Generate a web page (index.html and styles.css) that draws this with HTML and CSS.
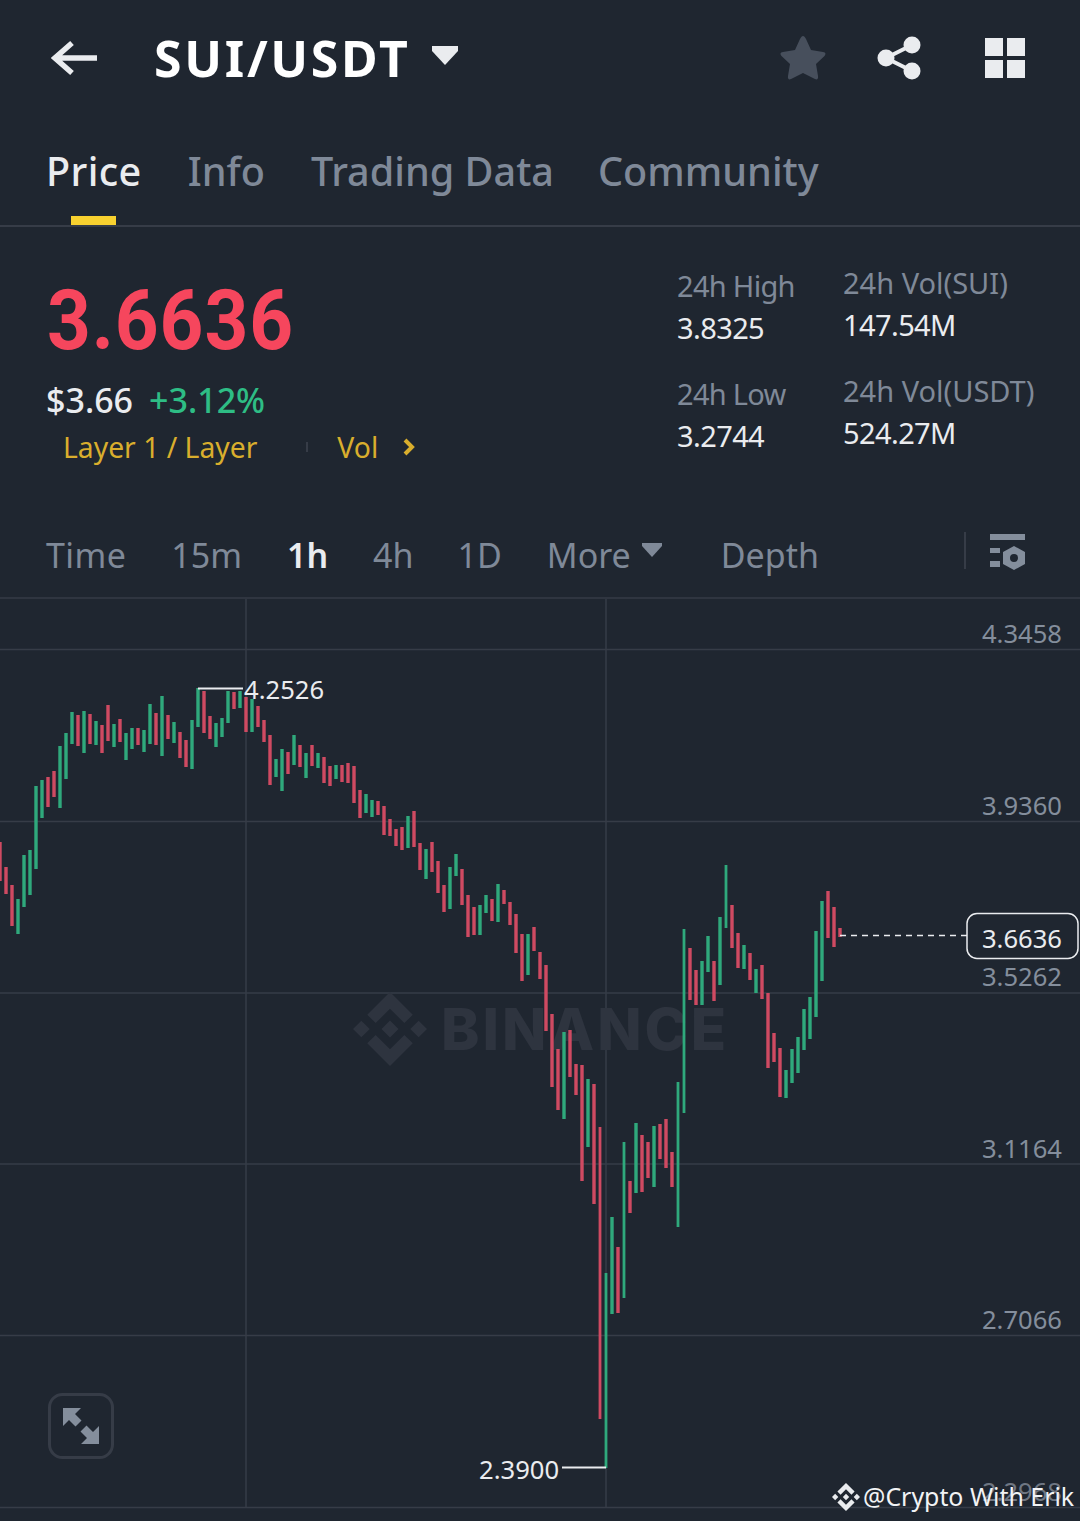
FILE: index.html
```html
<!DOCTYPE html>
<html lang="en">
<head>
<meta charset="utf-8">
<title>SUI/USDT</title>
<link rel="stylesheet" href="styles.css">
</head>
<body>
<main class="page">
  <header class="topbar">
    <svg class="back" viewBox="0 0 47 36"><path d="M46 18H6M21 3 4 18l17 15"/></svg>
    <h1 class="pair">SUI/USDT</h1>
    <svg class="caret" viewBox="0 0 28 21"><path d="M1 1h26v5L14 20 1 6z"/></svg>
    <div class="actions">
      <svg class="star" viewBox="0 0 46 46"><path d="M23 1c1 0 2 1 3 3l5 11 12 2c3 .5 3 2 1.500 4l-8.500 8 2 12c.5 3-1 4-3 3l-12-6-12 6c-2 1-3.500 0-3-3l2-12-8.500-8C0 19 0 17.500 3 17l12-2 5-11c1-2 2-3 3-3z"/></svg>
      <svg class="share" viewBox="0 0 44 44"><path d="M35 9 9 22l26 13"/><circle cx="35" cy="9" r="8.500"/><circle cx="9" cy="22" r="8.500"/><circle cx="35" cy="35" r="8.500"/></svg>
      <div class="apps"><i></i><i></i><i></i><i></i></div>
    </div>
  </header>

  <nav class="tabs">
    <a class="tab tab-active">Price</a>
    <a class="tab">Info</a>
    <a class="tab">Trading Data</a>
    <a class="tab tab-last">Community</a>
  </nav>

  <section class="stats">
    <div class="quote">
      <div class="price">3.6636</div>
      <div class="fiat"><span class="usd">$3.66</span><span class="chg">+3.12%</span></div>
      <div class="tags">
        <span class="tag">Layer 1 / Layer</span>
        <i class="tag-sep"></i>
        <span class="tag">Vol</span>
        <svg class="chev" viewBox="0 0 12 18"><path d="M2 2l7 7-7 7"/></svg>
      </div>
    </div>
    <dl class="col col-a">
      <dt>24h High</dt><dd>3.8325</dd>
      <dt>24h Low</dt><dd>3.2744</dd>
    </dl>
    <dl class="col col-b">
      <dt>24h Vol(SUI)</dt><dd>147.54M</dd>
      <dt>24h Vol(USDT)</dt><dd>524.27M</dd>
    </dl>
  </section>

  <nav class="intervals">
    <span class="iv iv-time">Time</span>
    <span class="iv iv-15">15m</span>
    <span class="iv iv-1h">1h</span>
    <span class="iv iv-4h">4h</span>
    <span class="iv iv-1d">1D</span>
    <span class="iv iv-more">More</span>
    <svg class="more-caret" viewBox="0 0 20 14"><path d="M0 0h20v3L10 14 0 3z"/></svg>
    <span class="iv iv-depth">Depth</span>
    <i class="iv-sep"></i>
    <svg class="cfg" viewBox="0 0 37 36"><path d="M0 0h35v6H0zM0 14h10v5H0zM0 27h10v6H0z"/><path fill-rule="evenodd" d="M24 12l11 6v12l-11 6-11-6V18zm0 8a4 4 0 1 0 0 8 4 4 0 0 0 0-8z"/></svg>
  </nav>

  <section class="chart">
    <svg class="plot" viewBox="0 599 1080 922">
      <defs>
        <symbol id="bnb" viewBox="0 0 126.610 126.610"><path d="M38.730 53.200 63.300 28.630l24.600 24.600 14.300-14.300L63.300 0 24.430 38.900zM0 63.300l14.300-14.310 14.310 14.310-14.310 14.300zM38.730 73.410l24.570 24.570 24.600-24.600 14.310 14.290-38.900 38.910-38.910-38.880zM97.990 63.310l14.300-14.310 14.320 14.300-14.310 14.320zM77.820 63.300 63.300 48.780 52.570 59.510l-1.230 1.240-2.550 2.550 14.510 14.500 14.520-14.510z"/></symbol>
      </defs>
      <path class="grid" d="M0 649.500H1080M0 821.500H1080M0 993H1080M0 1164H1080M0 1335.500H1080M0 1507.500H1080M246 599V1507M606 599V1507"/>
      <use class="wm" href="#bnb" x="353" y="992" width="74" height="74"/>
      <text class="wm-text" x="441" y="1050">BINANCE</text>
      <path class="up" d="M18 899V934M24 855V907M30 850V895M36 786V869M42 780V818M60 746V808M66 733V779M72 712V744M84 711V753M96 721V745M114 724V747M126 733V760M132 728V749M144 730V752M150 704V744M162 696V756M174 722V743M192 720V769M198 688V727M216 723V747M222 718V737M228 691V723M240 691V708M252 699V732M276 759V777M282 749V791M294 735V765M306 753V778M318 753V768M336 765V779M366 794V813M372 800V817M408 816V848M426 849V879M450 867V909M456 854V876M480 905V935M486 895V913M498 884V922M528 934V975M564 1032V1119M588 1079V1147M612 1217V1314M636 1123V1193M654 1126V1187M702 961V1005M708 936V972M720 917V985M744 945V969M756 969V993M786 1070V1098M792 1049V1083M798 1037V1073M804 1009V1050M810 997V1039M816 931V1017M822 901V981"/>
      <path class="up up-thin" d="M606 1273V1468M624 1142V1298M678 1082V1227M684 929V1113M726 865V928"/>
      <path class="down" d="M0 842V881M6 867V894M12 885V926M48 777V807M54 771V797M78 715V746M90 714V744M102 725V753M108 705V741M120 719V742M138 728V745M156 713V745M168 715V739M180 732V758M186 740V767M204 691V733M210 716V739M234 692V709M246 697V732M258 706V727M264 720V742M270 735V785M288 752V774M300 745V767M312 745V766M324 757V783M330 766V786M342 765V782M348 763V783M354 766V803M360 790V818M378 801V815M384 806V835M390 819V836M396 829V846M402 827V850M414 811V847M420 843V870M432 842V872M438 861V893M444 885V912M462 869V905M468 895V937M474 907V935M492 899V921M504 890V904M510 902V925M516 914V953M522 934V981M534 927V951M540 952V979M546 965V1031M552 1014V1087M558 1049V1110M570 1030V1077M576 1064V1095M582 1065V1181M594 1084V1204M618 1247V1313M630 1181V1213M642 1135V1192M648 1142V1178M660 1124V1159M666 1119V1168M672 1152V1187M690 948V1000M696 970V1005M714 961V1001M732 905V948M738 933V968M750 953V980M762 965V999M768 993V1068M774 1033V1062M780 1048V1097M828 891V938M834 907V947M840 928V937"/>
      <path class="down down-thin" d="M600 1127V1419"/>
      <path class="mark" d="M198 688.500H243M562 1467.500H606"/>
      <text class="mark-text" x="244" y="699">4.2526</text>
      <text class="mark-text" x="479" y="1479">2.3900</text>
      <path class="last" d="M840 935.500H967"/>
      <text class="axis" x="1062" y="643">4.3458</text>
      <text class="axis" x="1062" y="815">3.9360</text>
      <text class="axis" x="1062" y="986">3.5262</text>
      <text class="axis" x="1062" y="1158">3.1164</text>
      <text class="axis" x="1062" y="1329">2.7066</text>
      <text class="axis axis-dim" x="1062" y="1501">2.2968</text>
      <rect class="tagbox" x="967" y="913.500" width="111" height="45" rx="10"/>
      <text class="tagtext" x="1062" y="948">3.6636</text>
      <rect class="expand" x="49.500" y="1394.500" width="63" height="63" rx="13"/>
      <path class="expand-arrow" d="M63 1408H81L75 1414 81.500 1420.500 75.500 1426.500 69 1420 63 1426zM99 1444H81L87 1438 80.500 1431.500 86.500 1425.500 93 1432 99 1426z"/>
      <use class="credit-logo" href="#bnb" x="832" y="1483" width="28" height="28"/>
      <text class="credit" x="863" y="1506">@Crypto With Erik</text>
    </svg>
  </section>
</main>
</body>
</html>
```
FILE: styles.css
```css
* { box-sizing: border-box; }
html, body { margin: 0; padding: 0; }
body { background: #1f2630; color: #eaecef; font-family: "Noto Sans", "Liberation Sans", sans-serif; }
.page { width: 1080px; height: 1521px; display: flex; flex-direction: column; overflow: hidden; }

.topbar { height: 115px; display: flex; align-items: center; padding: 0 55px 0 51px; }
.back { width: 47px; height: 36px; fill: none; stroke: #eaecef; stroke-width: 5.500; }
.pair { margin: 0 0 0 56px; font-size: 50px; line-height: 1; font-weight: 700; color: #fff; letter-spacing: 2.700px; }
.caret { width: 28px; height: 21px; fill: #eaecef; margin: -4px 0 0 21px; }
.actions { margin-left: auto; display: flex; align-items: center; gap: 51px; }
.star { width: 46px; height: 46px; fill: #474f5c; }
.share { width: 44px; height: 44px; fill: #eaecef; margin-right: 13px; }
.share path { fill: none; stroke: #eaecef; stroke-width: 4; }
.apps { width: 40px; height: 40px; display: grid; grid-template-columns: 18px 18px; grid-template-rows: 18px 18px; gap: 4px; }
.apps i { background: #eaecef; }

.tabs { height: 112px; display: flex; align-items: center; gap: 46px; padding: 3px 0 0 46px; border-bottom: 2px solid #363c47; }
.tab { position: relative; font-size: 39.600px; line-height: 1; color: #7f8998; font-weight: 500; }
.tab-active { color: #eaecef; letter-spacing: .4px; }
.tab-active::after { content: ""; position: absolute; left: 25px; width: 45px; height: 9px; top: 64px; background: #f8d12f; }
.tab-last { margin-left: -2px; }

.stats { height: 291px; display: flex; padding: 0 0 0 47px; }
.quote { width: 630px; }
.price { margin-top: 44px; font-family: Roboto, sans-serif; font-size: 84px; line-height: 100px; font-weight: 700; color: #f6465d; letter-spacing: 1px; transform: scaleX(.91); transform-origin: left center; }
.fiat { display: flex; gap: 16px; margin: 7px 0 0 -1px; font-size: 34px; line-height: 44px; font-weight: 500; }
.usd { color: #eaecef; }
.chg { color: #2ebd85; }
.tags { display: flex; align-items: center; margin: 5px 0 0 16px; height: 40px; font-size: 28.300px; color: #d9ae2d; }
.tag-sep { width: 2px; height: 10px; background: #363c47; margin: 0 29px 0 49px; }
.chev { width: 12px; height: 18px; margin-left: 25px; fill: none; stroke: #d9ae2d; stroke-width: 4; }
.col { margin: 0; font-size: 29px; }
.col-a { width: 166px; margin-top: 37px; }
.col-b { margin-top: 34px; }
.col-a dt { letter-spacing: -.7px; }
dt { color: #7f8998; line-height: 44px; }
dd { margin: 0 0 24px; color: #eaecef; line-height: 40px; letter-spacing: -.6px; }

.intervals { height: 81px; display: flex; align-items: center; font-size: 34px; color: #7f8998; border-bottom: 2px solid #2f3540; padding: 0 0 6px 46px; flex: none; }
.iv { line-height: 1; }
.iv-time { letter-spacing: .4px; }
.iv-15 { margin-left: 45px; }
.iv-1h { margin-left: 45px; color: #eaecef; font-weight: 600; }
.iv-4h { margin-left: 45px; }
.iv-1d { margin-left: 44px; }
.iv-more { margin-left: 45px; }
.more-caret { width: 20px; height: 14px; fill: #7f8998; margin: -9px 0 0 11px; }
.iv-depth { margin-left: 59px; }
.iv-sep { width: 2px; height: 37px; background: #363c47; margin: -8px 0 0 145px; }
.cfg { width: 37px; height: 36px; fill: #848e9c; margin: -6px 0 0 24px; }

.chart { flex: 1; min-height: 0; }
.plot { display: block; width: 1080px; height: 922px; }
.grid { fill: none; stroke: #363c47; stroke-width: 1.500; }
.wm { fill: #2e343f; }
.wm-text { font-family: Inter, sans-serif; font-size: 58px; font-weight: 800; fill: #2e343f; letter-spacing: 3px; }
.up, .down { fill: none; stroke-width: 3.400; }
.up { stroke: #2fa97c; }
.down { stroke: #cf4a62; }
.up-thin, .down-thin { stroke-width: 2.800; }
.mark { fill: none; stroke: #eaecef; stroke-width: 2; }
.mark-text { font-size: 25.600px; fill: #eaecef; }
.last { fill: none; stroke: #eaecef; stroke-width: 1.500; stroke-dasharray: 6 5; }
.axis { font-size: 25.600px; fill: #848e9c; text-anchor: end; }
.axis-dim { fill: #6f7783; }
.tagbox { fill: #1f2630; stroke: #eaecef; stroke-width: 1.500; }
.tagtext { font-size: 25.600px; fill: #eaecef; text-anchor: end; }
.expand { fill: none; stroke: #363c47; stroke-width: 3; }
.expand-arrow { fill: #848e9c; }
.credit-logo { fill: #eaecef; }
.credit { font-size: 24.900px; fill: #f2f3f5; }
```
